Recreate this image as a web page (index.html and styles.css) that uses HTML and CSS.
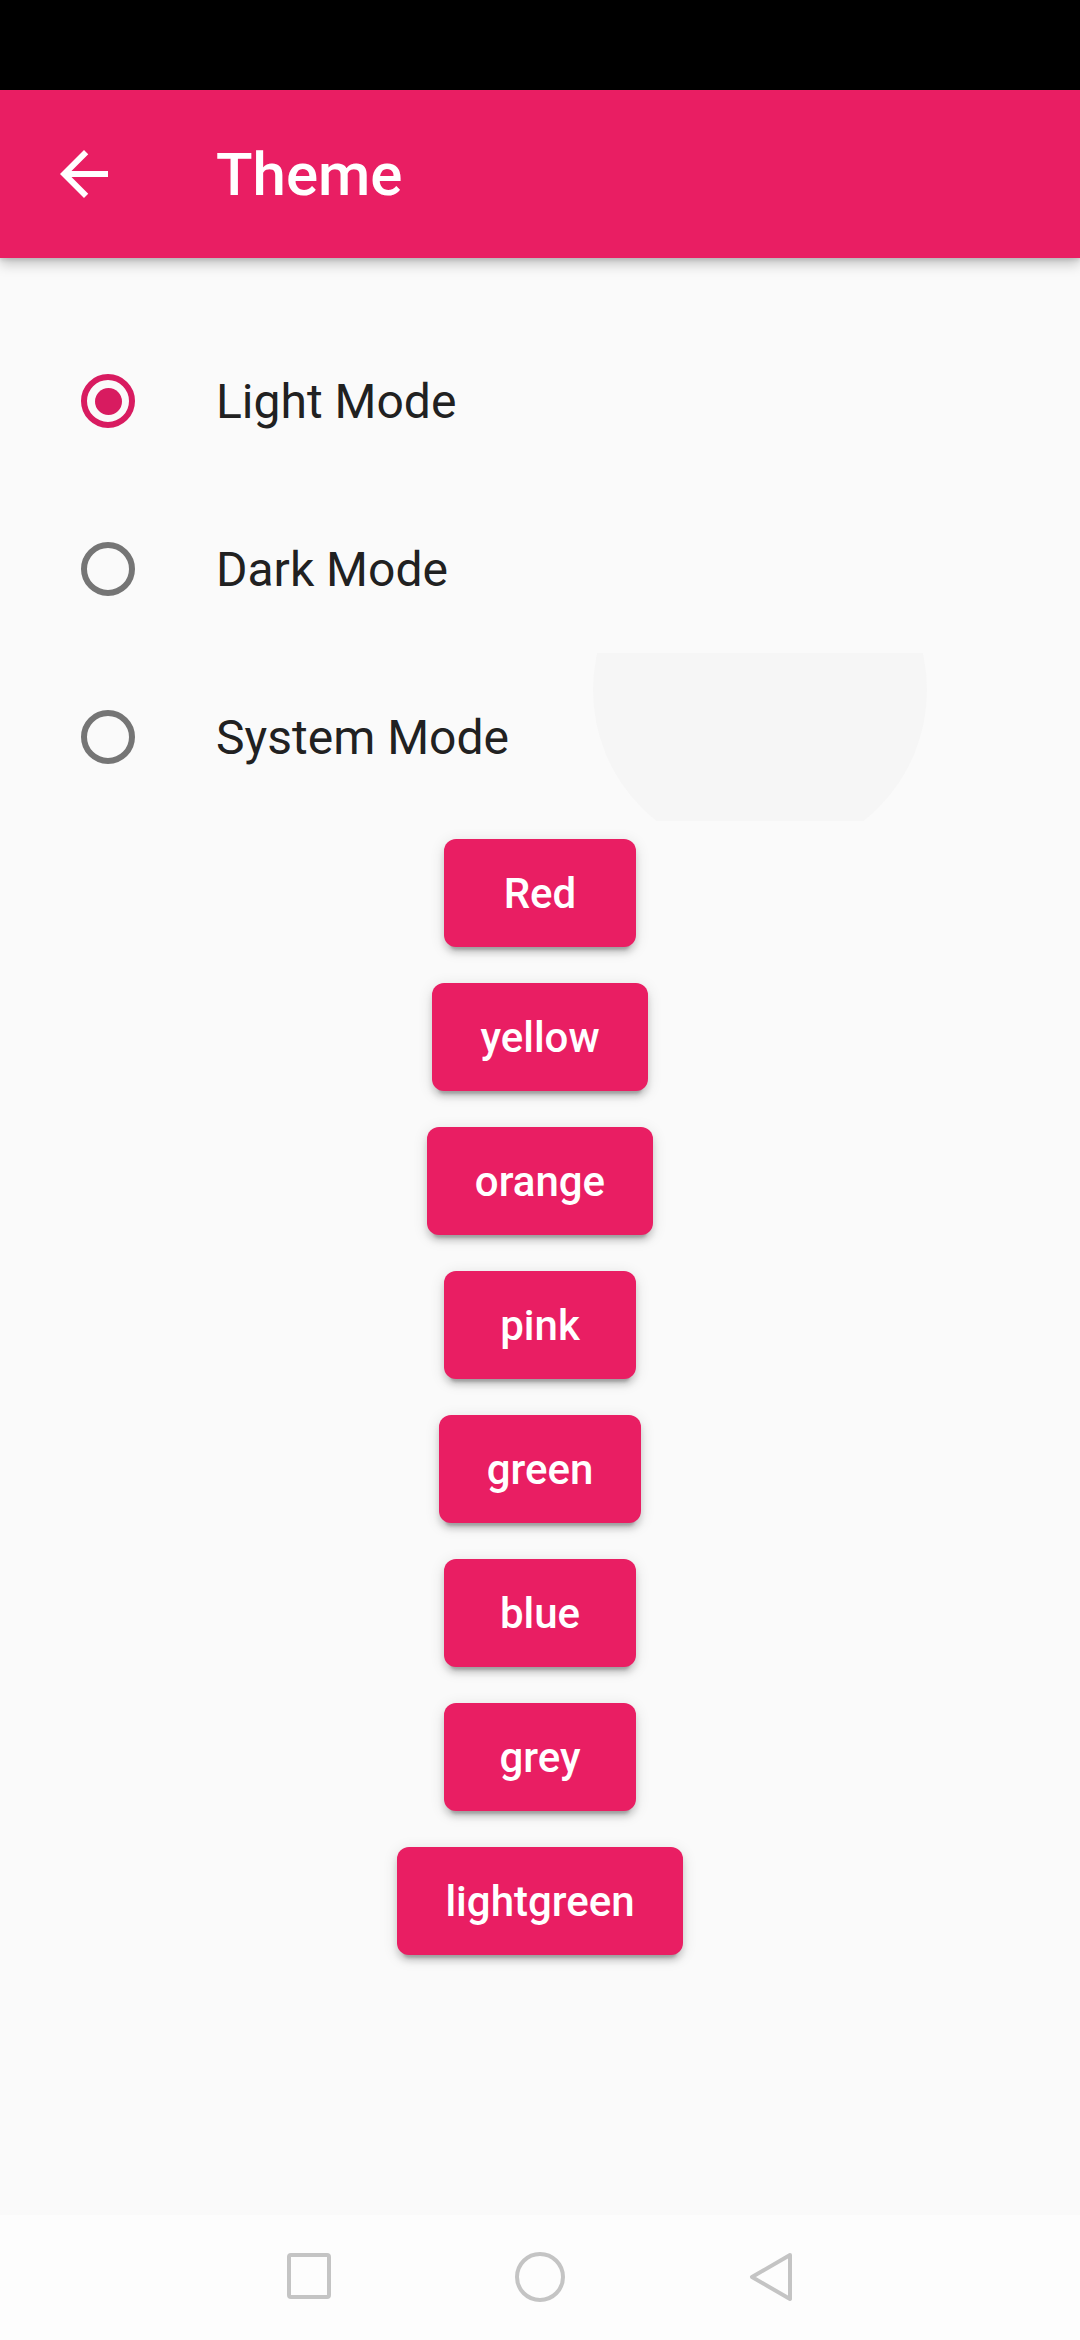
FILE: index.html
```html
<!DOCTYPE html>
<html lang="en">
<head>
  <meta charset="UTF-8">
  <meta name="viewport" content="width=device-width, initial-scale=1.0">
  <title>Theme</title>
  <link rel="stylesheet" href="styles.css">
</head>
<body>
  <div class="status-bar"></div>

  <header class="app-bar">
    <button class="back" aria-label="Back">
      <svg viewBox="0 0 24 24" width="72" height="72">
        <path fill="#fff" d="M20 11H7.83l5.59-5.59L12 4l-8 8 8 8 1.41-1.41L7.83 13H20v-2z"/>
      </svg>
    </button>
    <h1 class="title">Theme</h1>
  </header>

  <main class="content">
    <div class="modes">
      <label class="mode">
        <span class="radio checked"></span>
        <span class="mode-label">Light Mode</span>
      </label>
      <label class="mode">
        <span class="radio"></span>
        <span class="mode-label">Dark Mode</span>
      </label>
      <label class="mode">
        <span class="ripple"></span>
        <span class="radio"></span>
        <span class="mode-label">System Mode</span>
      </label>
    </div>

    <div class="colors">
      <button class="color-btn">Red</button>
      <button class="color-btn">yellow</button>
      <button class="color-btn">orange</button>
      <button class="color-btn">pink</button>
      <button class="color-btn">green</button>
      <button class="color-btn">blue</button>
      <button class="color-btn">grey</button>
      <button class="color-btn">lightgreen</button>
    </div>
  </main>

  <nav class="nav-bar">
    <svg class="nav-icon" viewBox="0 0 50 50" width="50" height="50">
      <rect x="5" y="3" width="40" height="42" rx="2" fill="none" stroke="#c4c4c4" stroke-width="4"/>
    </svg>
    <svg class="nav-icon" viewBox="0 0 50 50" width="50" height="50">
      <circle cx="25" cy="25" r="23" fill="none" stroke="#c4c4c4" stroke-width="4"/>
    </svg>
    <svg class="nav-icon" viewBox="0 0 50 50" width="50" height="50">
      <path d="M44 3 L6 25 L44 47 Z" fill="none" stroke="#c4c4c4" stroke-width="4" stroke-linejoin="round"/>
    </svg>
  </nav>
</body>
</html>
```

FILE: styles.css
```css
body {
  margin: 0;
  width: 1080px;
  height: 2340px;
  display: flex;
  flex-direction: column;
  background-color: #fafafa;
  font-family: Roboto, "Noto Sans", Arial, sans-serif;
  overflow: hidden;
}

.status-bar {
  height: 90px;
  background-color: #000;
  flex-shrink: 0;
}

.app-bar {
  height: 168px;
  flex-shrink: 0;
  display: flex;
  align-items: center;
  padding-left: 48px;
  background-color: #e91e63;
  box-shadow: 0 6px 12px rgba(0, 0, 0, 0.22), 0 2px 4px rgba(0, 0, 0, 0.12);
  position: relative;
  z-index: 2;
}

.back {
  width: 72px;
  height: 72px;
  padding: 0;
  border: none;
  background: none;
  display: flex;
}

.title {
  margin: 0 0 0 96px;
  font-size: 60px;
  font-weight: 500;
  color: #fff;
}

.content {
  flex: 1;
  display: flex;
  flex-direction: column;
  padding-top: 59px;
}

.mode {
  height: 168px;
  display: flex;
  align-items: center;
  padding-left: 81px;
  position: relative;
  overflow: hidden;
}

.ripple {
  position: absolute;
  left: 593px;
  top: -130px;
  width: 334px;
  height: 334px;
  border-radius: 50%;
  background-color: #f6f6f6;
}

.radio {
  width: 54px;
  height: 54px;
  box-sizing: border-box;
  border: 6px solid #757575;
  border-radius: 50%;
  display: flex;
  align-items: center;
  justify-content: center;
  position: relative;
}

.radio.checked {
  border-color: #d81b60;
}

.radio.checked::after {
  content: "";
  width: 27px;
  height: 27px;
  border-radius: 50%;
  background-color: #d81b60;
}

.mode-label {
  margin-left: 81px;
  font-size: 48px;
  color: #212121;
  position: relative;
}

.colors {
  display: flex;
  flex-direction: column;
  align-items: center;
  gap: 36px;
  padding-top: 18px;
}

.color-btn {
  min-width: 192px;
  height: 108px;
  box-sizing: border-box;
  padding: 0 48px;
  border: none;
  border-radius: 12px;
  background-color: #e91e63;
  color: #fff;
  font-family: Roboto, "Noto Sans", Arial, sans-serif;
  font-size: 42px;
  font-weight: 500;
  box-shadow: 0 9px 3px -6px rgba(0, 0, 0, 0.2), 0 6px 6px 0 rgba(0, 0, 0, 0.14), 0 3px 15px 0 rgba(0, 0, 0, 0.12);
}

.nav-bar {
  height: 123px;
  flex-shrink: 0;
  display: flex;
  justify-content: center;
  align-items: center;
  gap: 181px;
  background-color: #fdfdfd;
  padding-bottom: 2px;
}
```
